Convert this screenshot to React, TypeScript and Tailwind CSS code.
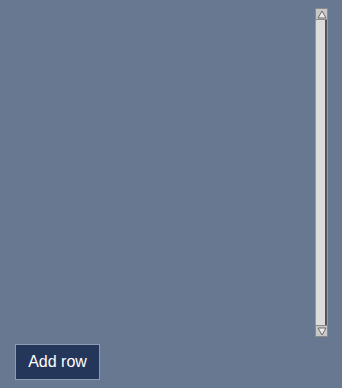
import React from 'react';

const ScrollArrow = ({ up }: { up?: boolean }) => (
  <div className="h-[12px] w-full border border-[#8a8a8a] bg-[#c8c8c8] flex items-center justify-center">
    <svg width="10" height="9" viewBox="0 0 10 9">
      {up ? (
        <polygon points="5,1 9,8 1,8" fill="#ececec" stroke="#6a6a6a" strokeWidth="1" />
      ) : (
        <polygon points="1,1 9,1 5,8" fill="#ececec" stroke="#6a6a6a" strokeWidth="1" />
      )}
    </svg>
  </div>
);

export default function App() {
  return (
    <div
      className="w-[342px] h-[388px] bg-[#687891] flex flex-col"
      style={{ fontFamily: '"Liberation Sans", Arial, sans-serif' }}
    >
      <div className="flex-1 flex justify-end pt-[8px] pr-[14px]">
        <div className="w-[13px] h-[329px] flex flex-col bg-[#b8b8b8]">
          <ScrollArrow up />
          <div className="flex-1 flex border-x border-[#9a9a9a]">
            <div className="flex-1 bg-[#dcdcdc]" />
            <div className="w-[2px] bg-[#555555]" />
          </div>
          <ScrollArrow />
        </div>
      </div>
      <div className="pl-[15px] pb-[8px]">
        <button className="h-[36px] w-[85px] bg-[#243659] border border-[#8e9ab0] text-white text-[16px] leading-none">
          Add row
        </button>
      </div>
    </div>
  );
}
